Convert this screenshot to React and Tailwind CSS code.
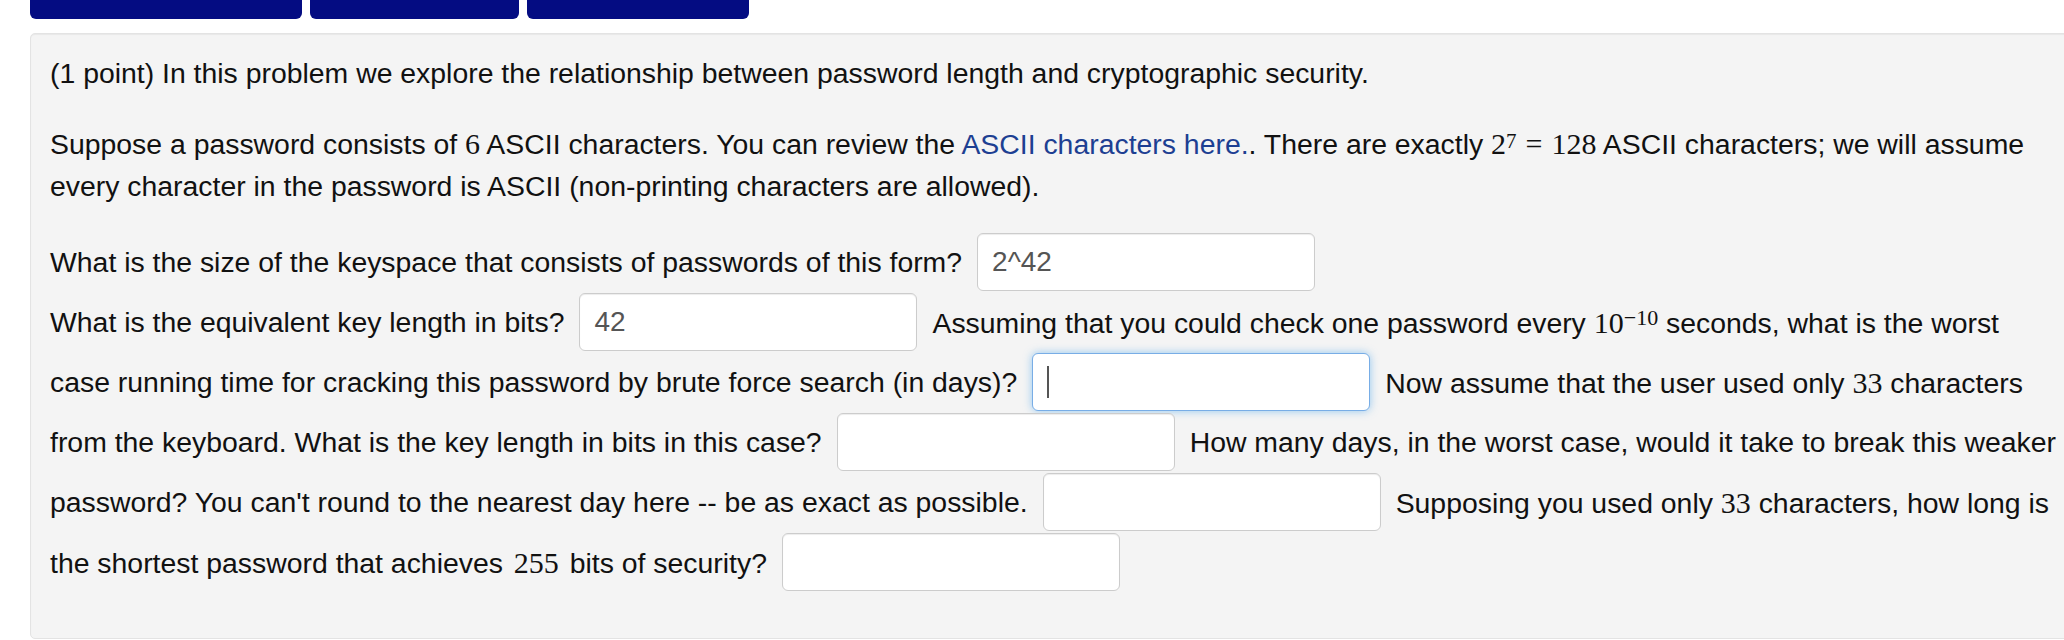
import React from 'react';

const M = ({ children, className = '' }) => (
  <span className={`font-['Liberation_Serif',serif] text-[30px] ${className}`}>{children}</span>
);

function Box({ value, focused }) {
  return (
    <div
      className={`mx-[15px] w-[338px] h-[58px] shrink-0 rounded-[6px] bg-white flex items-center pl-[14px] text-[28px] text-[#555] ${
        focused
          ? 'border border-[#78ade6] shadow-[0_0_8px_rgba(82,168,236,0.6)]'
          : 'border border-[#cccccc] shadow-[inset_0_1px_1px_rgba(0,0,0,0.075)]'
      }`}
    >
      {value}
      {focused && <span className="block w-[2px] h-[32px] bg-[#555]" />}
    </div>
  );
}

function Row({ children }) {
  return <div className="flex items-center h-[60px] whitespace-nowrap">{children}</div>;
}

export default function App() {
  return (
    <div className="bg-white w-[2064px] h-[640px] overflow-hidden font-['Liberation_Sans',Arial,sans-serif] text-[#111]">
      {/* nav buttons, cut at the top */}
      <div className="flex gap-[8px] pl-[30px]">
        <div className="w-[272px] h-[19px] rounded-b-[6px] bg-[#040c82]" />
        <div className="w-[209px] h-[19px] rounded-b-[6px] bg-[#040c82]" />
        <div className="w-[222px] h-[19px] rounded-b-[6px] bg-[#040c82]" />
      </div>

      <div className="ml-[30px] mt-[14px] w-[2100px] h-[606px] rounded-[5px] border border-[#e3e3e3] bg-[#f4f4f4] shadow-[inset_0_1px_1px_rgba(0,0,0,0.05)] pl-[19px] pt-[19px] text-[28.4px]">
        <p className="leading-[40px] whitespace-nowrap">
          (1 point) In this problem we explore the relationship between password length and cryptographic security.
        </p>

        <div className="mt-[30px] leading-[42px] whitespace-nowrap">
          <div>
            Suppose a password consists of <M>6</M> ASCII characters. You can review the{' '}
            <span className="text-[#1d3f92]">ASCII characters here.</span>. There are exactly{' '}
            <M>
              2<sup className="text-[21px] relative -top-[6px]">7</sup>
              <span className="mx-[9px]">=</span>128
            </M>{' '}
            ASCII characters; we will assume
          </div>
          <div>every character in the password is ASCII (non-printing characters are allowed).</div>
        </div>

        <div className="mt-[25px]">
          <Row>
            <span>What is the size of the keyspace that consists of passwords of this form?</span>
            <Box value="2^42" />
          </Row>
          <Row>
            <span>What is the equivalent key length in bits?</span>
            <Box value="42" />
            <span>
              Assuming that you could check one password every{' '}
              <M>
                10<sup className="text-[22px] relative -top-[8px]">−10</sup>
              </M>{' '}
              seconds, what is the worst
            </span>
          </Row>
          <Row>
            <span>case running time for cracking this password by brute force search (in days)?</span>
            <Box focused />
            <span>
              Now assume that the user used only <M>33</M> characters
            </span>
          </Row>
          <Row>
            <span>from the keyboard. What is the key length in bits in this case?</span>
            <Box />
            <span>How many days, in the worst case, would it take to break this weaker</span>
          </Row>
          <Row>
            <span>password? You can't round to the nearest day here -- be as exact as possible.</span>
            <Box />
            <span>
              Supposing you used only <M>33</M> characters, how long is
            </span>
          </Row>
          <Row>
            <span>
              the shortest password that achieves <M className="mx-[3px]">255</M> bits of security?
            </span>
            <Box />
          </Row>
        </div>
      </div>
    </div>
  );
}
